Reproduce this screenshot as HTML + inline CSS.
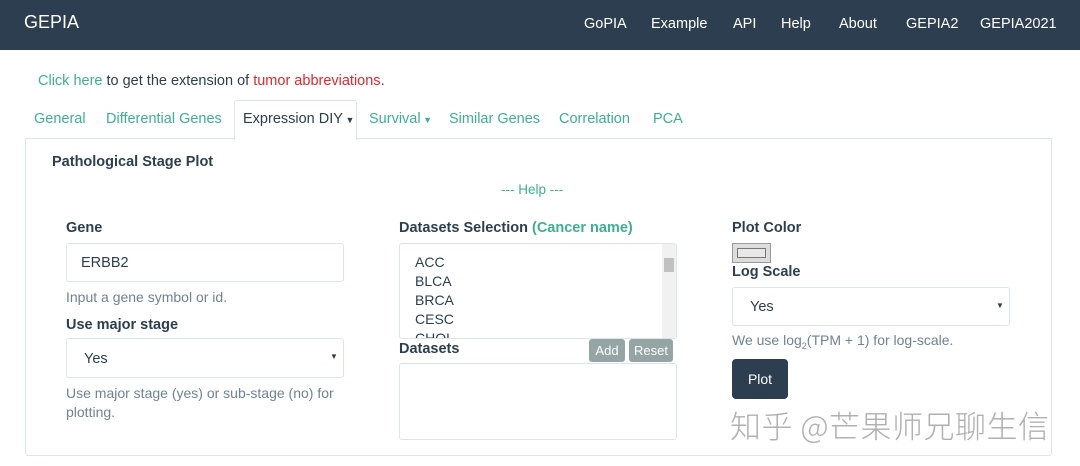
<!DOCTYPE html>
<html><head><meta charset="utf-8"><style>
*{box-sizing:border-box;margin:0;padding:0}
body{width:1080px;height:466px;background:#fff;font-family:"Liberation Sans","Noto Sans CJK SC",sans-serif;color:#2c3e50;position:relative;overflow:hidden;font-size:14px}
.a{position:absolute;white-space:nowrap}
.nav{position:absolute;left:0;top:0;width:1080px;height:50px;background:#2c3e50}
.nav .a{color:#fff;font-size:14.5px;top:16px}
.teal{color:#3fae93}
.tab{font-size:14.5px;top:111px;color:#3fae93}
.b{font-weight:bold;font-size:14.5px;color:#2c3e50}
.help{color:#6f8295;font-size:14px}
.box{position:absolute;border:1px solid #dce4ec;border-radius:3px;background:#fff}
.sel{font-size:14.5px}
.btn{position:absolute;background:#95a5a6;color:#fff;font-size:13px;border-radius:3px;text-align:center;line-height:23px}
</style></head><body>
<div class="nav">
<div class="a" style="left:24px;top:12px;font-size:18px">GEPIA</div>
<div class="a" style="left:584px">GoPIA</div>
<div class="a" style="left:651px">Example</div>
<div class="a" style="left:733px">API</div>
<div class="a" style="left:781px">Help</div>
<div class="a" style="left:839px">About</div>
<div class="a" style="left:906px">GEPIA2</div>
<div class="a" style="left:980px">GEPIA2021</div>
</div>
<div class="a" style="left:38px;top:73px;font-size:14.5px"><span class="teal">Click here</span> to get the extension of <span style="color:#e0282e">tumor abbreviations</span>.</div>
<div class="a tab" style="left:34px">General</div>
<div class="a tab" style="left:106px">Differential Genes</div>
<div class="box" style="left:234px;top:100px;width:123px;height:40px;border-bottom:none;border-radius:3px 3px 0 0;z-index:2"></div>
<div class="a tab" style="left:243px;color:#2c3e50;z-index:3">Expression DIY<span style="font-size:9px"> ▼</span></div>
<div class="a tab" style="left:369px">Survival<span style="font-size:9px"> ▼</span></div>
<div class="a tab" style="left:449px">Similar Genes</div>
<div class="a tab" style="left:559px">Correlation</div>
<div class="a tab" style="left:653px">PCA</div>
<div class="box" style="left:25px;top:138px;width:1027px;height:318px;border-radius:0 0 3px 3px"></div>
<div class="a b" style="left:52px;top:154px">Pathological Stage Plot</div>
<div class="a teal" style="left:501px;top:182px;font-size:13.5px">--- Help ---</div>

<div class="a b" style="left:66px;top:220px">Gene</div>
<div class="box" style="left:66px;top:243px;width:278px;height:39px"></div>
<div class="a sel" style="left:81px;top:255px">ERBB2</div>
<div class="a help" style="left:66px;top:289px">Input a gene symbol or id.</div>
<div class="a b" style="left:66px;top:317px">Use major stage</div>
<div class="box" style="left:66px;top:338px;width:278px;height:40px"></div>
<div class="a sel" style="left:84px;top:351px">Yes</div>
<div class="a" style="left:330px;top:352px;font-size:8px">▼</div>
<div class="a help" style="left:66px;top:385px">Use major stage (yes) or sub-stage (no) for</div>
<div class="a help" style="left:66px;top:404px">plotting.</div>

<div class="a b" style="left:399px;top:220px">Datasets Selection <span class="teal">(Cancer name)</span></div>
<div class="box" style="left:399px;top:243px;width:278px;height:96px;overflow:hidden">
<div style="position:absolute;left:15px;top:9px;font-size:14px;line-height:19px">ACC<br>BLCA<br>BRCA<br>CESC<br>CHOL</div>
<div style="position:absolute;right:0;top:0;width:14px;height:96px;background:#f1f1f1"></div>
<div style="position:absolute;right:2px;top:14px;width:10px;height:14px;background:#c1c1c1"></div>
</div>
<div class="a b" style="left:399px;top:341px">Datasets</div>
<div class="btn" style="left:589px;top:339px;width:36px">Add</div>
<div class="btn" style="left:629px;top:339px;width:44px">Reset</div>
<div class="box" style="left:399px;top:363px;width:278px;height:77px"></div>

<div class="a b" style="left:732px;top:220px">Plot Color</div>
<div style="position:absolute;left:732px;top:243px;width:39px;height:20px;background:#ddd;border:1px solid #999"><div style="margin:4px 4px;height:10px;border:1px solid #777;background:#e8e8e8"></div></div>
<div class="a b" style="left:732px;top:264px">Log Scale</div>
<div class="box" style="left:732px;top:287px;width:278px;height:39px"></div>
<div class="a sel" style="left:750px;top:299px">Yes</div>
<div class="a" style="left:996px;top:301px;font-size:8px">▼</div>
<div class="a help" style="left:732px;top:332px">We use log<sub style="font-size:9px">2</sub>(TPM + 1) for log-scale.</div>
<div style="position:absolute;left:732px;top:359px;width:56px;height:40px;background:#2c3e50;border-radius:4px;color:#fff;font-size:14px;text-align:center;line-height:40px">Plot</div>
<div class="a" style="left:730px;top:402px;font-size:31px;letter-spacing:0.5px;color:rgba(150,150,150,0.75);font-family:'Noto Sans CJK SC',sans-serif;font-weight:300">知乎 @芒果师兄聊生信</div>
</body></html>
